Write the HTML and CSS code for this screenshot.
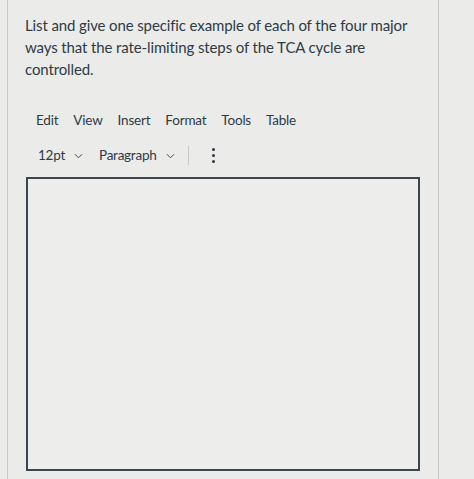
FILE: index.html
```html
<!DOCTYPE html>
<html>
<head>
<meta charset="utf-8">
<link rel="stylesheet" href="styles.css">
</head>
<body>
<div class="panel">
  <p class="question">List and give one specific example of each of the four major ways that the rate-limiting steps of the TCA cycle are controlled.</p>
  <div class="menubar">
    <span>Edit</span><span>View</span><span>Insert</span><span>Format</span><span>Tools</span><span>Table</span>
  </div>
  <div class="toolbar">
    <span class="dd">12pt <svg class="chev" viewBox="0 0 10 6" width="9" height="6"><path d="M1 1l4 4 4-4" fill="none" stroke="#2d3b45" stroke-width="1"/></svg></span>
    <span class="dd">Paragraph <svg class="chev" viewBox="0 0 10 6" width="9" height="6"><path d="M1 1l4 4 4-4" fill="none" stroke="#2d3b45" stroke-width="1"/></svg></span>
    <span class="sep"></span>
    <span class="more"><i></i><i></i><i></i></span>
  </div>
  <div class="editor"></div>
</div>
</body>
</html>
```
FILE: styles.css
```css
html, body {
  margin: 0;
  padding: 0;
  background: #ebecea;
  height: 100%;
}
body {
  font-family: Lato, "Noto Sans", sans-serif;
  color: #2d3b45;
}
.panel {
  margin-left: 7px;
  width: 432px;
  height: 479px;
  border-left: 1px solid #c5c9cb;
  border-right: 1px solid #c5c9cb;
  padding: 14px 17px 0 17px;
  box-sizing: border-box;
}
.question {
  margin: 0;
  font-size: 15px;
  letter-spacing: -0.12px;
  line-height: 22px;
  width: 395px;
}
.menubar {
  display: flex;
  gap: 15px;
  margin-top: 30px;
  padding-left: 11px;
  font-size: 13.5px;
  letter-spacing: -0.2px;
  line-height: 20px;
}
.toolbar {
  display: flex;
  align-items: center;
  margin-top: 10px;
  padding-left: 13px;
  height: 30px;
  font-size: 13.5px;
  letter-spacing: -0.25px;
}
.dd {
  display: flex;
  align-items: center;
  gap: 9px;
  margin-right: 16px;
}
.chev { display: block; margin-top: 1px; }
.sep {
  width: 1px;
  height: 19px;
  background: #c5c9cb;
  margin-left: -3px;
  margin-right: 23px;
}
.more {
  display: flex;
  flex-direction: column;
  gap: 3px;
}
.more i {
  display: block;
  width: 3px;
  height: 3px;
  border-radius: 50%;
  background: #2d3b45;
}
.editor {
  margin-top: 7px;
  margin-left: 1px;
  width: 394px;
  height: 294px;
  border: 2px solid #3a4550;
  box-sizing: border-box;
  background: #edeeec;
}
```
